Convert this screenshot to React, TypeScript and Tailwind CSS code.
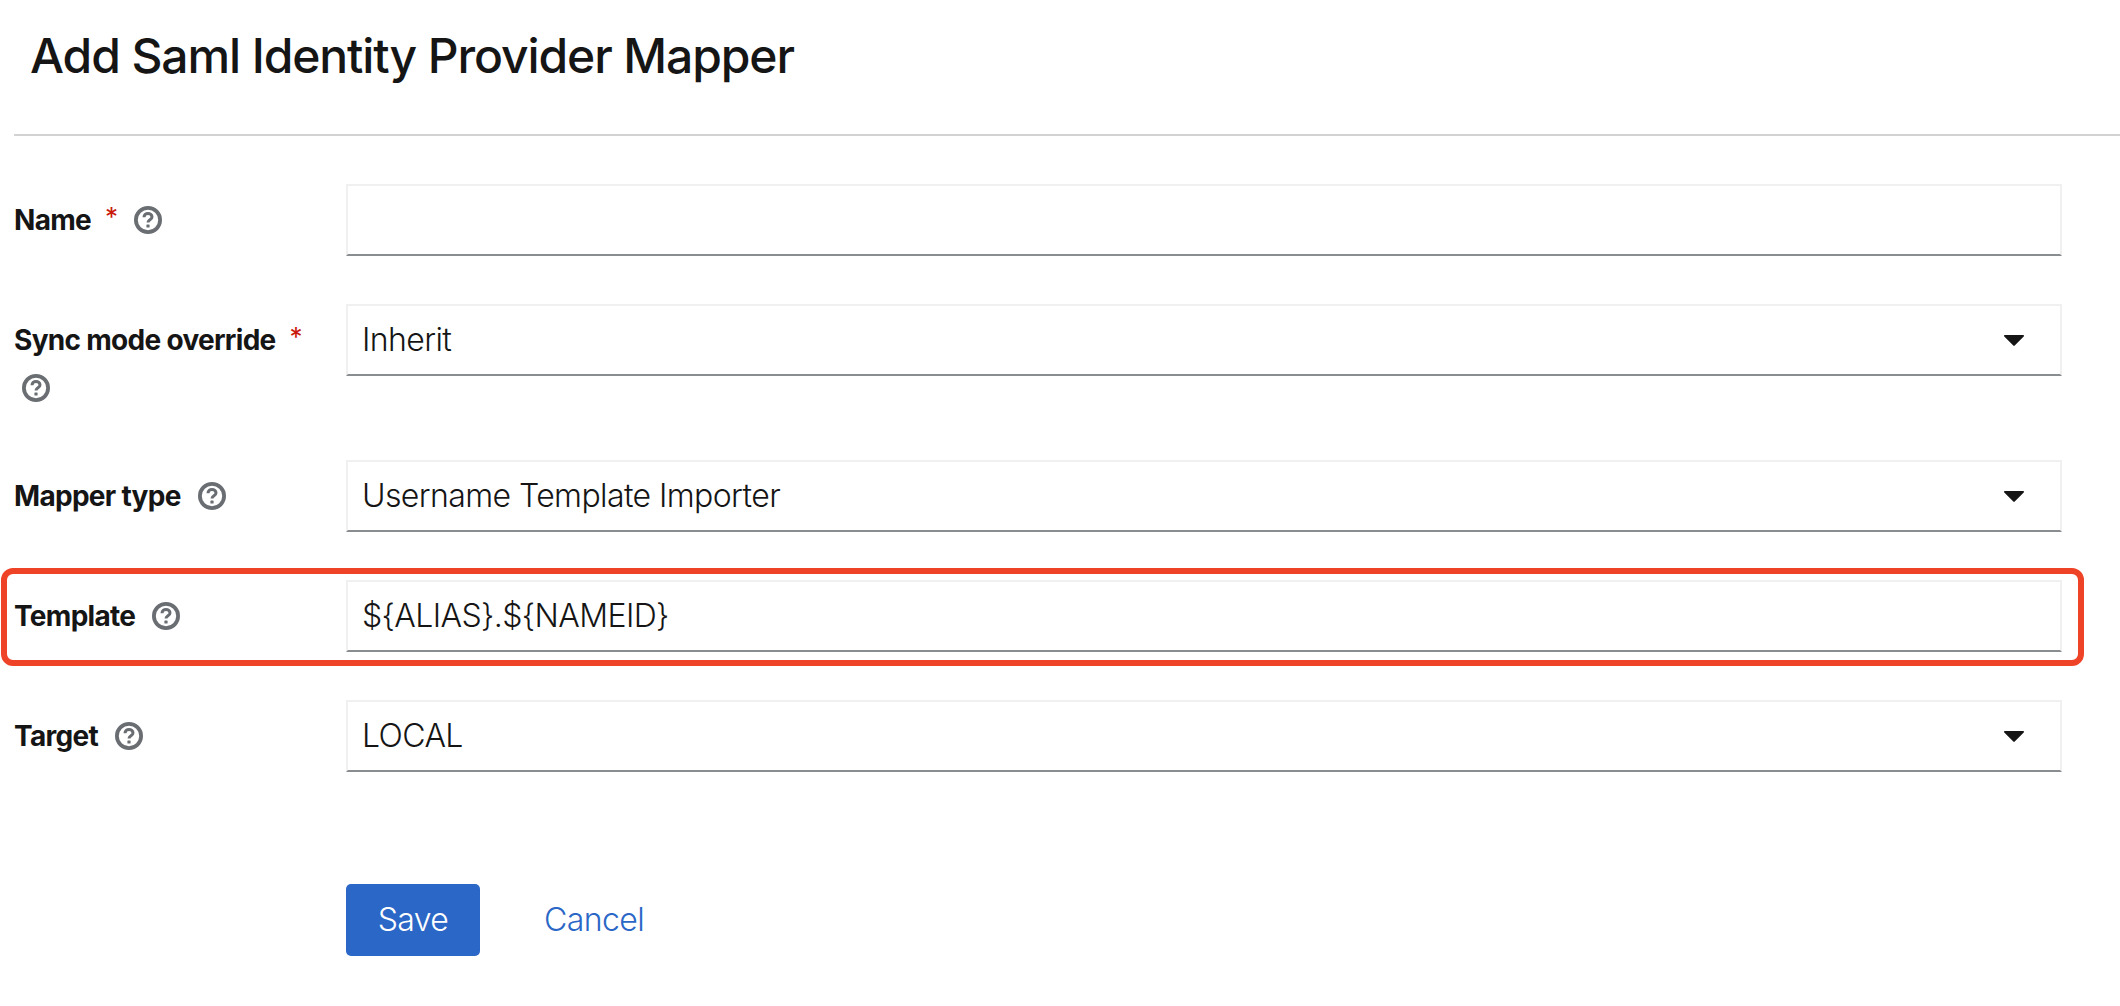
const HelpIcon = ({ className = "ml-[17px]" }: { className?: string }) => (
  <svg width="28" height="28" viewBox="0 0 28 28" className={`shrink-0 ${className}`} aria-hidden="true">
    <circle cx="14" cy="14" r="12.1" fill="none" stroke="#6a6e73" strokeWidth="3.8" />
    <path d="M10 11.2c0-2.3 1.8-3.7 4-3.7s4 1.4 4 3.4c0 2.9-4 2.9-4 5.6" fill="none" stroke="#6a6e73" strokeWidth="3" />
    <rect x="12.4" y="18.4" width="3.2" height="3.2" rx="0.6" fill="#6a6e73" />
  </svg>
);

const Caret = () => (
  <svg width="20" height="11" viewBox="0 0 20 11" className="shrink-0" aria-hidden="true">
    <path d="M1 0h18c.9 0 1.3 1 .7 1.6l-9 9c-.4.4-1 .4-1.4 0l-9-9C-.3 1 .1 0 1 0z" fill="#151515" />
  </svg>
);

function Label({ text, required, wrapIcon }: { text: string; required?: boolean; wrapIcon?: boolean }) {
  return (
    <div className="w-[332px] shrink-0 pt-[16px] text-[28px] leading-[40px] font-bold tracking-[-0.7px] text-[#151515]">
      <div className="flex h-[40px] items-center">
        <span>{text}</span>
        {required && <span className="mb-[6px] ml-[14px] text-[26px] font-normal leading-none text-[#c9190b]">*</span>}
        {!wrapIcon && <HelpIcon />}
      </div>
      {wrapIcon && (
        <div className="flex h-[52px] items-center pt-[4px]">
          <HelpIcon className="ml-[8px]" />
        </div>
      )}
    </div>
  );
}

function Field({ value, select }: { value?: string; select?: boolean }) {
  return (
    <div className="flex h-[72px] flex-1 items-center justify-between border-2 border-[#f0f0f0] border-b-[#8a8d90] pl-[14px] pr-[36px] text-[32px] font-[350] tracking-[-0.6px] text-[#151515]">
      <span>{value}</span>
      {select && <Caret />}
    </div>
  );
}

export default function App() {
  return (
    <div className="h-[1006px] overflow-hidden bg-white font-['Inter',sans-serif]">
      <div className="ml-[14px] h-[136px] border-b-2 border-[#d2d2d2] pl-[16px] pt-[26px]">
        <h1 className="text-[48px] leading-[60px] font-medium tracking-[-1.1px] text-[#151515]">
          Add Saml Identity Provider Mapper
        </h1>
      </div>

      <form className="flex flex-col gap-[48px] pl-[14px] pr-[58px] pt-[48px]">
        <div className="flex">
          <Label text="Name" required />
          <Field />
        </div>
        <div className="flex">
          <Label text="Sync mode override" required wrapIcon />
          <Field value="Inherit" select />
        </div>
        <div className="flex">
          <Label text="Mapper type" />
          <Field value="Username Template Importer" select />
        </div>
        <div className="relative flex">
          {/* Red highlight drawn over the row */}
          <div className="absolute -bottom-[14px] -left-[13px] -right-[22px] -top-[12px] rounded-[12px] border-[6px] border-[#ee4327]" />
          <Label text="Template" />
          <Field value="${ALIAS}.${NAMEID}" />
        </div>
        <div className="flex">
          <Label text="Target" />
          <Field value="LOCAL" select />
        </div>

        <div className="mt-[64px] flex items-center pl-[332px]">
          <button type="button" className="h-[72px] w-[134px] rounded-[5px] bg-[#2a67c7] text-[32px] font-[350] tracking-[-0.6px] text-white">
            Save
          </button>
          <a className="ml-[64px] text-[32px] font-[350] tracking-[-0.6px] text-[#2a67c7]">Cancel</a>
        </div>
      </form>
    </div>
  );
}
